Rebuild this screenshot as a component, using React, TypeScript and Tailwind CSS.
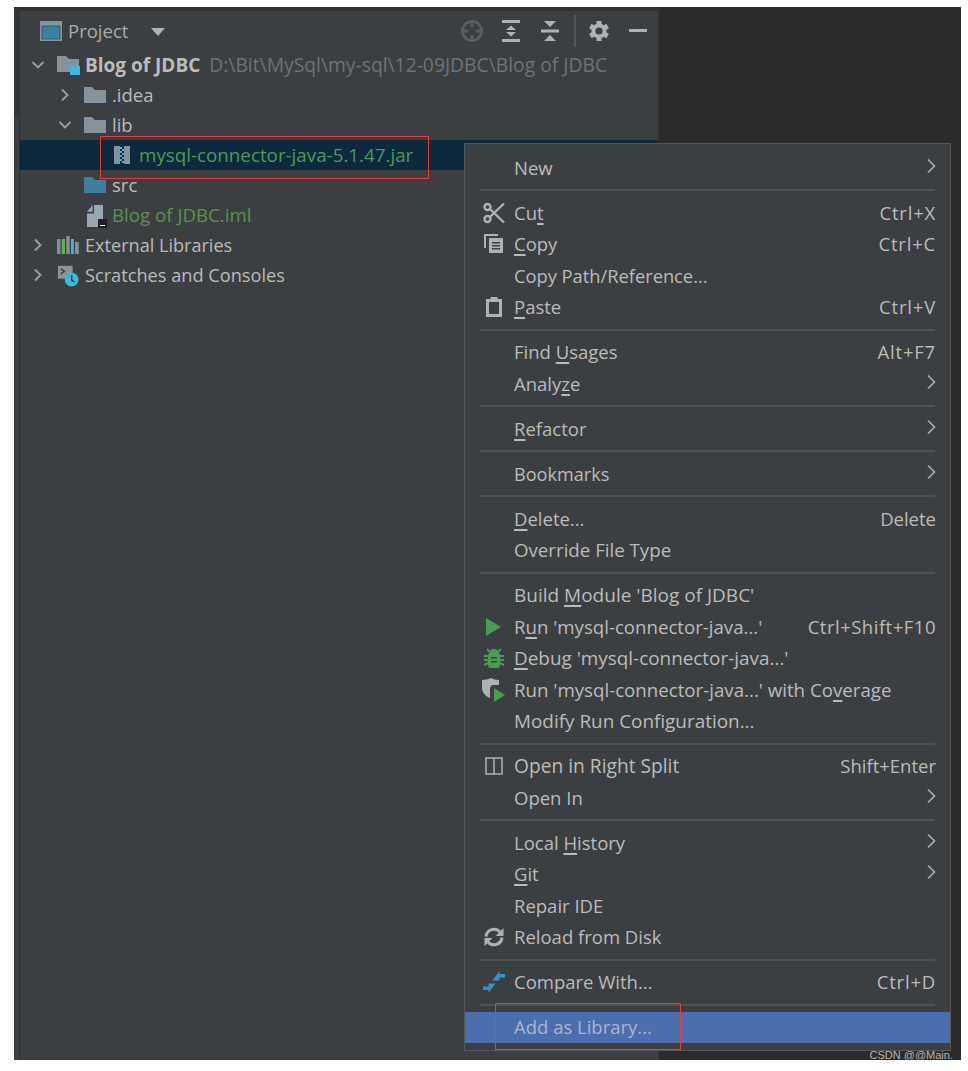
import React from "react";

const font = "font-['Open_Sans','Noto_Sans',sans-serif]";

type Ic = React.ReactNode;

const Chevron = ({ down }: { down?: boolean }) => (
  <svg width="16" height="16" viewBox="0 0 16 16" fill="none" stroke="#9da0a2" strokeWidth="1.8">
    {down ? <path d="M2.5 5 8 10.5 13.5 5" /> : <path d="M5 2.5 10.5 8 5 13.5" />}
  </svg>
);

const Folder = ({ color = "#87939a" }: { color?: string }) => (
  <svg width="22" height="20" viewBox="0 0 22 20">
    <path d="M0 2h8l3 3h11v13H0z" fill={color} />
  </svg>
);

const ModuleIcon = () => (
  <svg width="22" height="22" viewBox="0 0 22 22" className="overflow-visible">
    <path d="M0 2h9l3 3h10v13H0z" fill="#87939a" />
    <rect x="13" y="12" width="10" height="9" fill="#40b6e0" />
  </svg>
);

const JarIcon = () => (
  <svg width="22" height="20" viewBox="0 0 22 20">
    <rect x="3" y="1" width="16" height="18" fill="#87939a" />
    <rect x="9" y="1" width="4" height="18" fill="#0d293e" />
    <path d="M9 2h2v2H9zM11 4h2v2h-2zM9 6h2v2H9zM11 8h2v2h-2zM9 10h2v2H9zM11 12h2v2h-2zM9 14h2v2H9zM11 16h2v2h-2z" fill="#40b6e0" />
  </svg>
);

const ImlIcon = () => (
  <svg width="22" height="24" viewBox="0 0 22 24" className="overflow-visible">
    <path d="M3 10.5h7V2h9v14h-5v8H3z" fill="#9aa7b0" />
    <path d="M3 8.8 8.6 2v6.8z" fill="#9aa7b0" />
    <rect x="14" y="16" width="9" height="9" fill="#231f20" />
    <rect x="16" y="22" width="5" height="1" fill="#fff" />
  </svg>
);

const LibIcon = () => (
  <svg width="22" height="20" viewBox="0 0 22 20">
    <rect x="0" y="4" width="3.4" height="15" fill="#87939a" />
    <rect x="4.7" y="4" width="3.3" height="15" fill="#62b543" />
    <rect x="9.3" y="1" width="3.4" height="18" fill="#87939a" />
    <rect x="14" y="4" width="2.8" height="15" fill="#40b6e0" />
    <rect x="18" y="7" width="3.7" height="12" fill="#87939a" />
  </svg>
);

const ScratchIcon = () => (
  <svg width="24" height="24" viewBox="0 0 24 24">
    <rect x="1" y="2" width="16" height="14" fill="#87939a" />
    <path d="M4 5l4 3-4 3" fill="none" stroke="#3c3f41" strokeWidth="1.5" />
    <circle cx="16" cy="17" r="7.5" fill="#40b6e0" />
    <path d="M16 12v5.5l3 2" fill="none" stroke="#3c3f41" strokeWidth="1.6" />
  </svg>
);

const ProjectIcon = () => (
  <svg width="22" height="20" viewBox="0 0 22 20">
    <rect x="0" y="0" width="22" height="20" fill="#87939a" />
    <rect x="2" y="5" width="18" height="13" fill="#3d7f9c" stroke="#2b3a40" strokeWidth="0.6" />
  </svg>
);

const Gear = () => (
  <svg width="20" height="20" viewBox="0 0 20 20" className="mr-[20px]">
    <circle cx="10" cy="10" r="5.5" fill="none" stroke="#afb1b3" strokeWidth="4" />
    <g fill="#afb1b3">
      <rect x="7.5" y="0" width="5" height="20" />
      <rect x="7.5" y="0" width="5" height="20" transform="rotate(60 10 10)" />
      <rect x="7.5" y="0" width="5" height="20" transform="rotate(120 10 10)" />
    </g>
    <circle cx="10" cy="10" r="3.6" fill="#3c3f41" />
  </svg>
);

const ToolbarIcons = () => (
  <div className="flex items-center">
    <svg width="24" height="24" viewBox="0 0 24 24" fill="none" stroke="#5a5d5f" strokeWidth="3" className="mr-[17px]">
      <circle cx="12" cy="12" r="9.5" />
      <path d="M12 2v6M12 16v6M2 12h6M16 12h6" />
    </svg>
    <svg width="20" height="24" viewBox="0 0 20 24" className="mr-[19px]">
      <path d="M1 1h18v3H1zM1 20h18v3H1z" fill="#afb1b3" />
      <path d="M10 6.5 15 11H5zM10 17.5 15 13H5z" fill="#afb1b3" />
    </svg>
    <svg width="20" height="24" viewBox="0 0 20 24" className="mr-[14px]">
      <path d="M4 2h12l-6 6zM4 22h12l-6-6z" fill="#afb1b3" />
      <rect x="1" y="10.5" width="18" height="3" fill="#afb1b3" />
    </svg>
    <div className="w-[2px] h-[32px] bg-[#515658] mr-[13px]" />
    <Gear />
    <div className="w-[18px] h-[3px] bg-[#afb1b3]" />
  </div>
);

const Cut: Ic = (
  <svg width="22" height="22" viewBox="0 0 22 22" fill="none" stroke="#afb1b3" strokeWidth="2.4">
    <circle cx="4.5" cy="5" r="3" />
    <circle cx="4.5" cy="17" r="3" />
    <path d="M7 7l14 13.5M7 15 21 1.5" />
  </svg>
);
const Copy: Ic = (
  <svg width="20" height="20" viewBox="0 0 20 20">
    <path d="M0 0h14v2H2v12H0z" fill="#afb1b3" />
    <rect x="5" y="4" width="14" height="15" fill="#afb1b3" />
    <path d="M8 8h8v1.5H8zM8 11h8v1.5H8zM8 14h8v1.5H8z" fill="#3c3f41" />
  </svg>
);
const Paste: Ic = (
  <svg width="16" height="20" viewBox="0 0 16 20">
    <path fillRule="evenodd" d="M0 2h4.5V0h7v2H16v18H0zM3 5v12h10V5z" fill="#afb1b3" />
  </svg>
);
const Run: Ic = (
  <svg width="18" height="20" viewBox="0 0 18 20">
    <path d="M1 1l15 9-15 9z" fill="#499c54" />
  </svg>
);
const Debug: Ic = (
  <svg width="20" height="20" viewBox="0 0 20 20">
    <path d="M4 6h12v11a3 3 0 01-3 3H7a3 3 0 01-3-3z" fill="#499c54" />
    <path d="M5 6c0-3 2-5 5-5s5 2 5 5z" fill="#499c54" />
    <path d="M3 1l3 3M17 1l-3 3M0 8h4M20 8h-4M0 12h4M20 12h-4M0 17l4-2M20 17l-4-2" stroke="#499c54" strokeWidth="2" />
    <path d="M7 9h6v1.6H7zM7 13h6v1.6H7z" fill="#3c3f41" />
  </svg>
);
const Coverage: Ic = (
  <svg width="24" height="24" viewBox="0 0 24 24">
    <path d="M0 2c3 0 7-1 9-2 2 1 5 2 8 2v5h-6c-2 0-3 2-3 4v9C3 18 0 14 0 9z" fill="#afb1b3" />
    <path d="M12 10l11 7-11 7z" fill="#499c54" />
  </svg>
);
const Split: Ic = (
  <svg width="18" height="18" viewBox="0 0 18 18" fill="none" stroke="#afb1b3" strokeWidth="1.5">
    <rect x="1" y="1" width="16" height="16" />
    <path d="M9 1v16" />
  </svg>
);
const Reload: Ic = (
  <svg width="20" height="20" viewBox="0 0 20 20" fill="none" stroke="#afb1b3" strokeWidth="3">
    <path d="M2 9.5a8 8 0 0 1 14-4.5" />
    <path d="M18 10.5a8 8 0 0 1-14 4.5" />
    <path d="M19.5 1v8h-8z" fill="#afb1b3" stroke="none" />
    <path d="M.5 19v-8h8z" fill="#afb1b3" stroke="none" />
  </svg>
);
const Compare: Ic = (
  <svg width="22" height="22" viewBox="0 0 22 22">
    <path d="M16.5 0 9.5 9.5h7zM16.5 3h5.5v3.5h-5.5z" fill="#3592c4" />
    <path d="M5.5 22l7-9.5h-7zM0 15.5h5.5V19H0z" fill="#3592c4" />
  </svg>
);

type Row =
  | { sep: true }
  | {
      sep?: false;
      label: React.ReactNode;
      icon?: Ic;
      key?: string;
      sub?: boolean;
      active?: boolean;
      cls?: string;
      kc?: string;
    };

const U = ({ children }: { children: React.ReactNode }) => (
  <span className="underline decoration-[1.5px] underline-offset-[3px]">{children}</span>
);

const wide = "tracking-[0.8px]";

const rows: Row[] = [
  { label: "New", sub: true },
  { sep: true },
  { label: <>Cu<U>t</U></>, icon: Cut, key: "Ctrl+X", kc: wide },
  { label: <><U>C</U>opy</>, icon: Copy, key: "Ctrl+C", kc: wide },
  { label: "Copy Path/Reference...", cls: "text-[18.3px]" },
  { label: <><U>P</U>aste</>, icon: Paste, key: "Ctrl+V", kc: wide },
  { sep: true },
  { label: <>Find <U>U</U>sages</>, key: "Alt+F7", kc: wide },
  { label: <>Analy<U>z</U>e</>, sub: true },
  { sep: true },
  { label: <><U>R</U>efactor</>, sub: true },
  { sep: true },
  { label: "Bookmarks", sub: true, cls: "text-[18.1px] pt-[1px]" },
  { sep: true },
  { label: <><U>D</U>elete...</>, key: "Delete" },
  { label: "Override File Type", cls: "text-[18.7px]" },
  { sep: true },
  { label: <>Build <U>M</U>odule 'Blog of JDBC'</>, cls: "text-[19px]" },
  { label: <>R<U>u</U>n 'mysql-connector-java...'</>, icon: Run, key: "Ctrl+Shift+F10", kc: "tracking-[0.5px]", cls: "text-[18.65px]" },
  { label: <><U>D</U>ebug 'mysql-connector-java...'</>, icon: Debug, cls: "text-[18.9px]" },
  { label: <>Run 'mysql-connector-java...' with Co<U>v</U>erage</>, icon: Coverage, cls: "text-[18.7px]" },
  { label: "Modify Run Configuration...", cls: "text-[18.9px]" },
  { sep: true },
  { label: "Open in Right Split", icon: Split, key: "Shift+Enter", cls: "text-[19.2px]" },
  { label: "Open In", sub: true },
  { sep: true },
  { label: <>Local <U>H</U>istory</>, sub: true },
  { label: <><U>G</U>it</>, sub: true },
  { label: "Repair IDE" },
  { label: "Reload from Disk", icon: Reload },
  { sep: true },
  { label: "Compare With...", icon: Compare, key: "Ctrl+D", kc: wide },
  { sep: true },
  { label: "Add as Library...", active: true },
];

const Menu = () => (
  <div className="absolute left-[450px] top-[136px] w-[487px] h-[908px] bg-[#3c3f41] border border-[#55585a] pt-[8px] text-[18.5px] text-[#bbbbbb]">
    {rows.map((r, i) =>
      r.sep ? (
        <div key={i} className="h-[13.5px] flex items-center px-[15px]">
          <div className="h-[2px] w-full bg-[#515151]" />
        </div>
      ) : (
        <div
          key={i}
          className={`h-[31.5px] flex items-center pl-[15px] pr-[14px] ${r.active ? "bg-[#4b6eaf] text-[#aab6c8]" : ""}`}
        >
          <div className="w-[34px] h-[24px] flex items-center justify-center pr-[6px] shrink-0">{r.icon}</div>
          <div className={`flex-1 whitespace-nowrap ${r.cls ?? ""}`}>{r.label}</div>
          {r.key && <div className={`whitespace-nowrap ${r.kc ?? ""}`}>{r.key}</div>}
          {r.sub && (
            <svg width="10" height="16" viewBox="0 0 10 16" fill="none" stroke="#afb1b3" strokeWidth="1.6" className="mb-[4px]">
              <path d="M2 1.5 8.5 8 2 14.5" />
            </svg>
          )}
        </div>
      ),
    )}
  </div>
);

const TreeRow = ({
  pad,
  chev,
  icon,
  children,
  selected,
}: {
  pad: string;
  chev?: "right" | "down";
  icon: Ic;
  children: React.ReactNode;
  selected?: boolean;
}) => (
  <div className={`h-[30px] flex items-center whitespace-nowrap ${pad} ${selected ? "bg-[#0d293e]" : ""}`}>
    <div className="w-4 h-4 shrink-0">{chev && <Chevron down={chev === "down"} />}</div>
    <div className="w-[22px] ml-[11px] mr-[6px] h-[24px] flex items-center justify-center shrink-0">{icon}</div>
    {children}
  </div>
);

export default function App() {
  return (
    <div className={`w-[968px] h-[1071px] bg-white pt-[7px] pl-[14px] ${font}`}>
      <div className="relative w-[947px] h-[1053px] flex bg-[#2b2b2b] overflow-hidden">
        <div className="w-[6px] shrink-0 flex flex-col bg-[#3c3f41] border-r border-[#323232]">
          <div className="h-[108px] bg-[#313335]" />
        </div>
        <div className="w-[639px] shrink-0 bg-[#3c3f41] border-r border-[#323232] flex flex-col text-[18.5px] text-[#bbbbbb]">
          <div className="h-[4px] bg-[#2f3133]" />
          <div className="h-[39px] flex items-center pl-[20px] pr-[11px] text-[#a9abad]">
            <ProjectIcon />
            <span className="ml-[6px]">Project</span>
            <svg width="14" height="8" viewBox="0 0 14 8" className="ml-[23px] mt-[2px]">
              <path d="M0 0h14L7 8z" fill="#afb1b3" />
            </svg>
            <div className="flex-1" />
            <ToolbarIcons />
          </div>
          <div>
            <TreeRow pad="pl-[10px]" chev="down" icon={<ModuleIcon />}>
              <span className="font-bold text-[19px] text-[#bbbbbb]">Blog of JDBC</span>
              <span className="ml-[9px] text-[19.3px] text-[#6f7274]">D:\Bit\MySql\my-sql\12-09JDBC\Blog of JDBC</span>
            </TreeRow>
            <TreeRow pad="pl-[37px]" chev="right" icon={<Folder />}>.idea</TreeRow>
            <TreeRow pad="pl-[37px]" chev="down" icon={<Folder />}>lib</TreeRow>
            <TreeRow pad="pl-[64px]" icon={<JarIcon />} selected>
              <span className="text-[18.8px] text-[#4f9a57]">mysql-connector-java-5.1.47.jar</span>
            </TreeRow>
            <TreeRow pad="pl-[37px]" icon={<Folder color="#3d7f9c" />}>src</TreeRow>
            <TreeRow pad="pl-[37px]" icon={<ImlIcon />}>
              <span className="text-[18.7px] text-[#5e8f4f]">Blog of JDBC.iml</span>
            </TreeRow>
            <TreeRow pad="pl-[10px]" chev="right" icon={<LibIcon />}>
              <span className="text-[18.1px] pt-[1px]">External Libraries</span>
            </TreeRow>
            <TreeRow pad="pl-[10px]" chev="right" icon={<ScratchIcon />}>
              <span className="text-[18.2px] pt-[1px]">Scratches and Consoles</span>
            </TreeRow>
          </div>
        </div>
        <div className="flex-1" />
        <Menu />
        <div className="absolute left-[86px] top-[129px] w-[329px] h-[43px] border border-[#f03a3a]" />
        <div className="absolute left-[481px] top-[996px] w-[186px] h-[47px] border border-[#f03a3a]" />
        <div className="absolute right-[8px] bottom-[-2px] text-[11px] leading-[14px] text-[#b4b4b4] font-['Liberation_Sans',sans-serif]">
          CSDN @@Main.
        </div>
      </div>
    </div>
  );
}
